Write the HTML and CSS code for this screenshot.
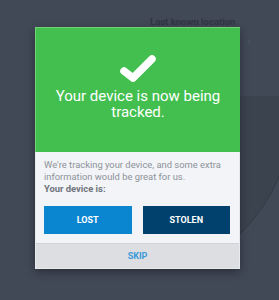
FILE: index.html
```html
<!DOCTYPE html>
<html>
<head>
<meta charset="utf-8">
<link rel="stylesheet" href="styles.css">
</head>
<body>
<div class="backdrop">
  <div class="bg-title">Last known location</div>
  <div class="bg-note">s</div>
  <div class="bg-map"><div class="bg-circle"></div></div>
</div>
<div class="modal">
  <div class="modal-head">
    <svg class="check" width="38" height="28" viewBox="0 0 38 28">
      <path d="M5 17 L14 24 L33 5" fill="none" stroke="#ffffff" stroke-width="7.5" stroke-linecap="round" stroke-linejoin="round"/>
    </svg>
    <div class="title">Your device is now being tracked.</div>
  </div>
  <div class="modal-body">
    <p class="msg">We're tracking your device, and some extra information would be great for us.<br><b>Your device is:</b></p>
    <div class="actions">
      <button class="btn btn-lost">LOST</button>
      <button class="btn btn-stolen">STOLEN</button>
    </div>
  </div>
  <div class="modal-foot">SKIP</div>
</div>
</body>
</html>
```
FILE: styles.css
```css
* { box-sizing: border-box; }
html, body { margin: 0; padding: 0; }
body {
  width: 279px;
  height: 300px;
  overflow: hidden;
  background: #414856;
  font-family: Roboto, "Liberation Sans", sans-serif;
  padding-top: 27px;
  position: relative;
}
.backdrop {
  position: absolute;
  inset: 0;
  overflow: hidden;
}
.bg-title {
  position: absolute;
  left: 150px;
  top: 16px;
  font-size: 9.5px;
  font-weight: 700;
  color: #303642;
  white-space: nowrap;
}
.bg-note {
  position: absolute;
  left: 247px;
  top: 37px;
  font-size: 8px;
  color: #4e5563;
}
.bg-map {
  position: absolute;
  left: 236px;
  top: 96px;
  right: 0;
  bottom: 0;
  overflow: hidden;
}
.bg-circle {
  position: absolute;
  left: -289px;
  top: -159px;
  width: 346px;
  height: 346px;
  border-radius: 50%;
  background: #3b434f;
  border: 1px solid #333a45;
}
.modal {
  position: relative;
  margin-left: 35px;
  width: 205px;
  background: #f2f4f7;
  box-shadow: 0 3px 8px rgba(0,0,0,0.35);
  border: 1px solid #e6e9ee;
  border-top: 0;
}
.modal-head {
  background: #43bf4f;
  height: 125px;
  padding-top: 26px;
  display: flex;
  flex-direction: column;
  align-items: center;
  border-top: 1px solid #6fd379;
  margin: 0 -1px;
  border-left: 1px solid #6fd379;
}
.check { display: block; }
.title {
  margin-top: 6px;
  width: 175px;
  text-align: center;
  color: #ffffff;
  font-size: 15px;
  line-height: 16px;
}
.modal-body {
  padding: 7px 9px 9px 8px;
}
.msg {
  margin: 0;
  font-size: 9.4px;
  line-height: 12px;
  color: #8d929a;
}
.msg b { color: #6f747d; font-weight: 700; }
.actions {
  margin-top: 11px;
  display: flex;
  gap: 11px;
}
.btn {
  flex: 1;
  height: 28px;
  border: 0;
  padding: 0;
  font-family: Roboto, "Liberation Sans", sans-serif;
  font-size: 9px;
  font-weight: 700;
  color: #ffffff;
}
.btn-lost { background: #0a86d1; }
.btn-stolen { background: #00426d; }
.modal-foot {
  height: 25px;
  background: #dcdee1;
  border-top: 1px solid #d0d3d8;
  display: flex;
  align-items: center;
  justify-content: center;
  font-size: 9px;
  font-weight: 700;
  color: #3d9ad8;
}
```
